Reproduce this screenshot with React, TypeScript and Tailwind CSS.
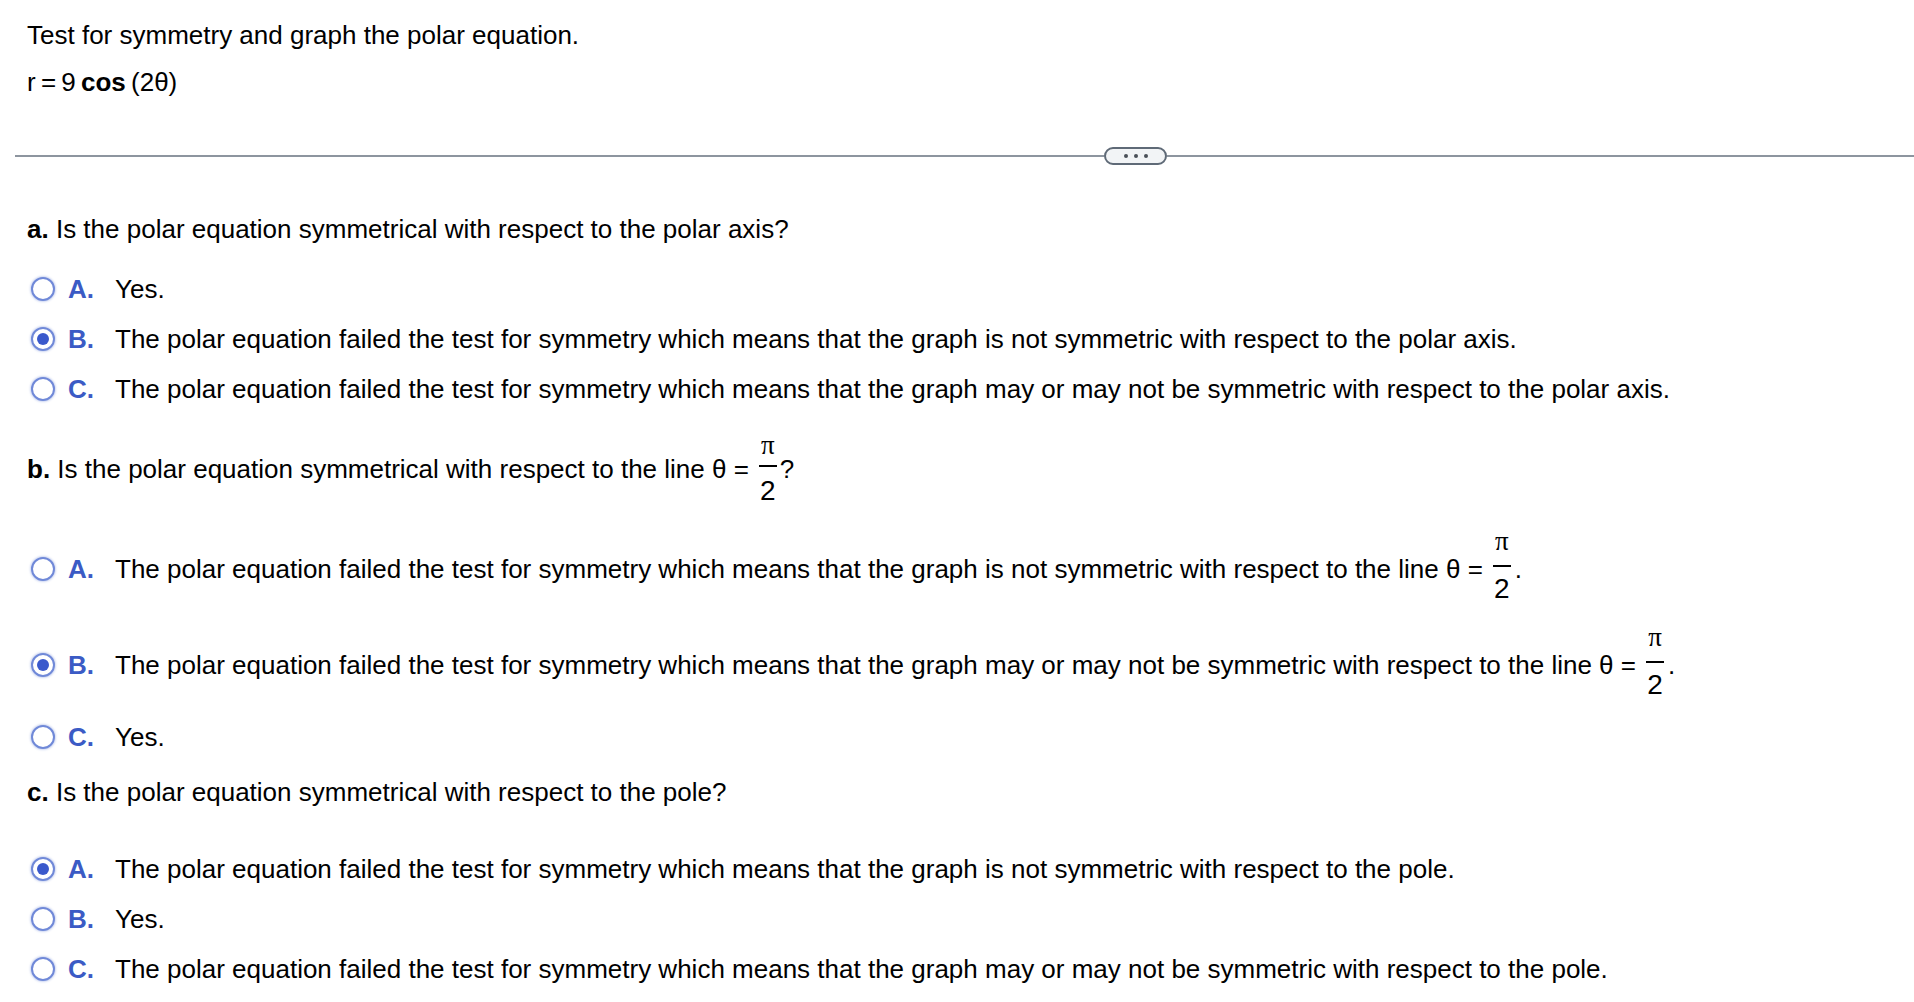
import React from "react";

type Choice = {
  letter: string;
  checked?: boolean;
  text: string;
  frac?: boolean;
  rowClass: string;
};

function Frac({ className = "", tight = false }: { className?: string; tight?: boolean }) {
  return (
    <span className={`flex flex-col items-center ${tight ? "" : "pb-[6px]"} ${className}`}>
      <span className="font-['Liberation_Serif',serif] text-[27px] leading-[22px]">π</span>
      <span className={`${tight ? "mt-[9px]" : "mt-[13px]"} h-[2px] w-[18px] bg-black`} />
      <span className={`${tight ? "mt-[11px]" : "mt-[9px]"} text-[28px] leading-[26px]`}>2</span>
    </span>
  );
}

function Radio({ checked }: { checked?: boolean }) {
  return (
    <span className="ml-[4px] grid h-[24px] w-[24px] shrink-0 place-items-center rounded-full border-2 border-[#7089d8] bg-white shadow-[0_0_2px_1px_rgba(112,137,216,0.35)]">
      {checked ? <span className="h-[12px] w-[12px] rounded-full bg-[#3a59cc]" /> : null}
    </span>
  );
}

function Option({ choice }: { choice: Choice }) {
  return (
    <div className={`flex h-[30px] items-center ${choice.rowClass}`}>
      <Radio checked={choice.checked} />
      <span className="ml-[13px] w-[47px] shrink-0 font-bold text-[#3b5bc5]">{choice.letter}.</span>
      <span className="whitespace-nowrap">{choice.text}</span>
      {choice.frac ? (
        <>
          <Frac className="ml-[10px]" />
          <span className="ml-[4px]">.</span>
        </>
      ) : null}
    </div>
  );
}

const partA: Choice[] = [
  { letter: "A", text: "Yes.", rowClass: "mt-[30px]" },
  {
    letter: "B",
    checked: true,
    text: "The polar equation failed the test for symmetry which means that the graph is not symmetric with respect to the polar axis.",
    rowClass: "mt-[20px]",
  },
  {
    letter: "C",
    text: "The polar equation failed the test for symmetry which means that the graph may or may not be symmetric with respect to the polar axis.",
    rowClass: "mt-[20px]",
  },
];

const partB: Choice[] = [
  {
    letter: "A",
    text: "The polar equation failed the test for symmetry which means that the graph is not symmetric with respect to the line θ =",
    frac: true,
    rowClass: "mt-[70px]",
  },
  {
    letter: "B",
    checked: true,
    text: "The polar equation failed the test for symmetry which means that the graph may or may not be symmetric with respect to the line θ =",
    frac: true,
    rowClass: "mt-[66px]",
  },
  { letter: "C", text: "Yes.", rowClass: "mt-[42px]" },
];

const partC: Choice[] = [
  {
    letter: "A",
    checked: true,
    text: "The polar equation failed the test for symmetry which means that the graph is not symmetric with respect to the pole.",
    rowClass: "mt-[47px]",
  },
  { letter: "B", text: "Yes.", rowClass: "mt-[20px]" },
  {
    letter: "C",
    text: "The polar equation failed the test for symmetry which means that the graph may or may not be symmetric with respect to the pole.",
    rowClass: "mt-[20px]",
  },
];

export default function App() {
  return (
    <div className="min-h-[1002px] w-[1914px] overflow-hidden bg-white pl-[27px] pt-[20px] font-['Liberation_Sans',Arial,sans-serif] text-[26px] leading-[30px] text-black">
      <div className="flex h-[30px] items-center">Test for symmetry and graph the polar equation.</div>
      <div className="mt-[17px] flex h-[30px] items-center whitespace-pre [word-spacing:-2px]">
        r = 9 <span className="font-bold">cos</span> (2θ)
      </div>

      <div className="-ml-[12px] mt-[50px] flex h-[18px] items-center">
        <div className="h-[2px] w-[1089px] bg-[#8d959f]" />
        <div className="flex h-[18px] w-[63px] shrink-0 items-center justify-center gap-[6px] rounded-full border-2 border-[#5f6a77] bg-[#f2f4f6]">
          <span className="h-[4px] w-[4px] rounded-full bg-[#4b5058]" />
          <span className="h-[4px] w-[4px] rounded-full bg-[#4b5058]" />
          <span className="h-[4px] w-[4px] rounded-full bg-[#4b5058]" />
        </div>
        <div className="h-[2px] flex-1 bg-[#8d959f]" />
      </div>

      <div className="mt-[49px] flex h-[30px] items-center whitespace-pre">
        <span className="font-bold">a.</span> Is the polar equation symmetrical with respect to the polar axis?
      </div>
      {partA.map((c) => (
        <Option key={"a" + c.letter} choice={c} />
      ))}

      <div className="mt-[50px] flex h-[30px] items-center whitespace-pre">
        <span className="font-bold">b.</span>
        <span> Is the polar equation symmetrical with respect to the line θ =</span>
        <Frac className="ml-[10px]" tight />
        <span className="ml-[3px]">?</span>
      </div>
      {partB.map((c) => (
        <Option key={"b" + c.letter} choice={c} />
      ))}

      <div className="mt-[25px] flex h-[30px] items-center whitespace-pre">
        <span className="font-bold">c.</span> Is the polar equation symmetrical with respect to the pole?
      </div>
      {partC.map((c) => (
        <Option key={"c" + c.letter} choice={c} />
      ))}
    </div>
  );
}
